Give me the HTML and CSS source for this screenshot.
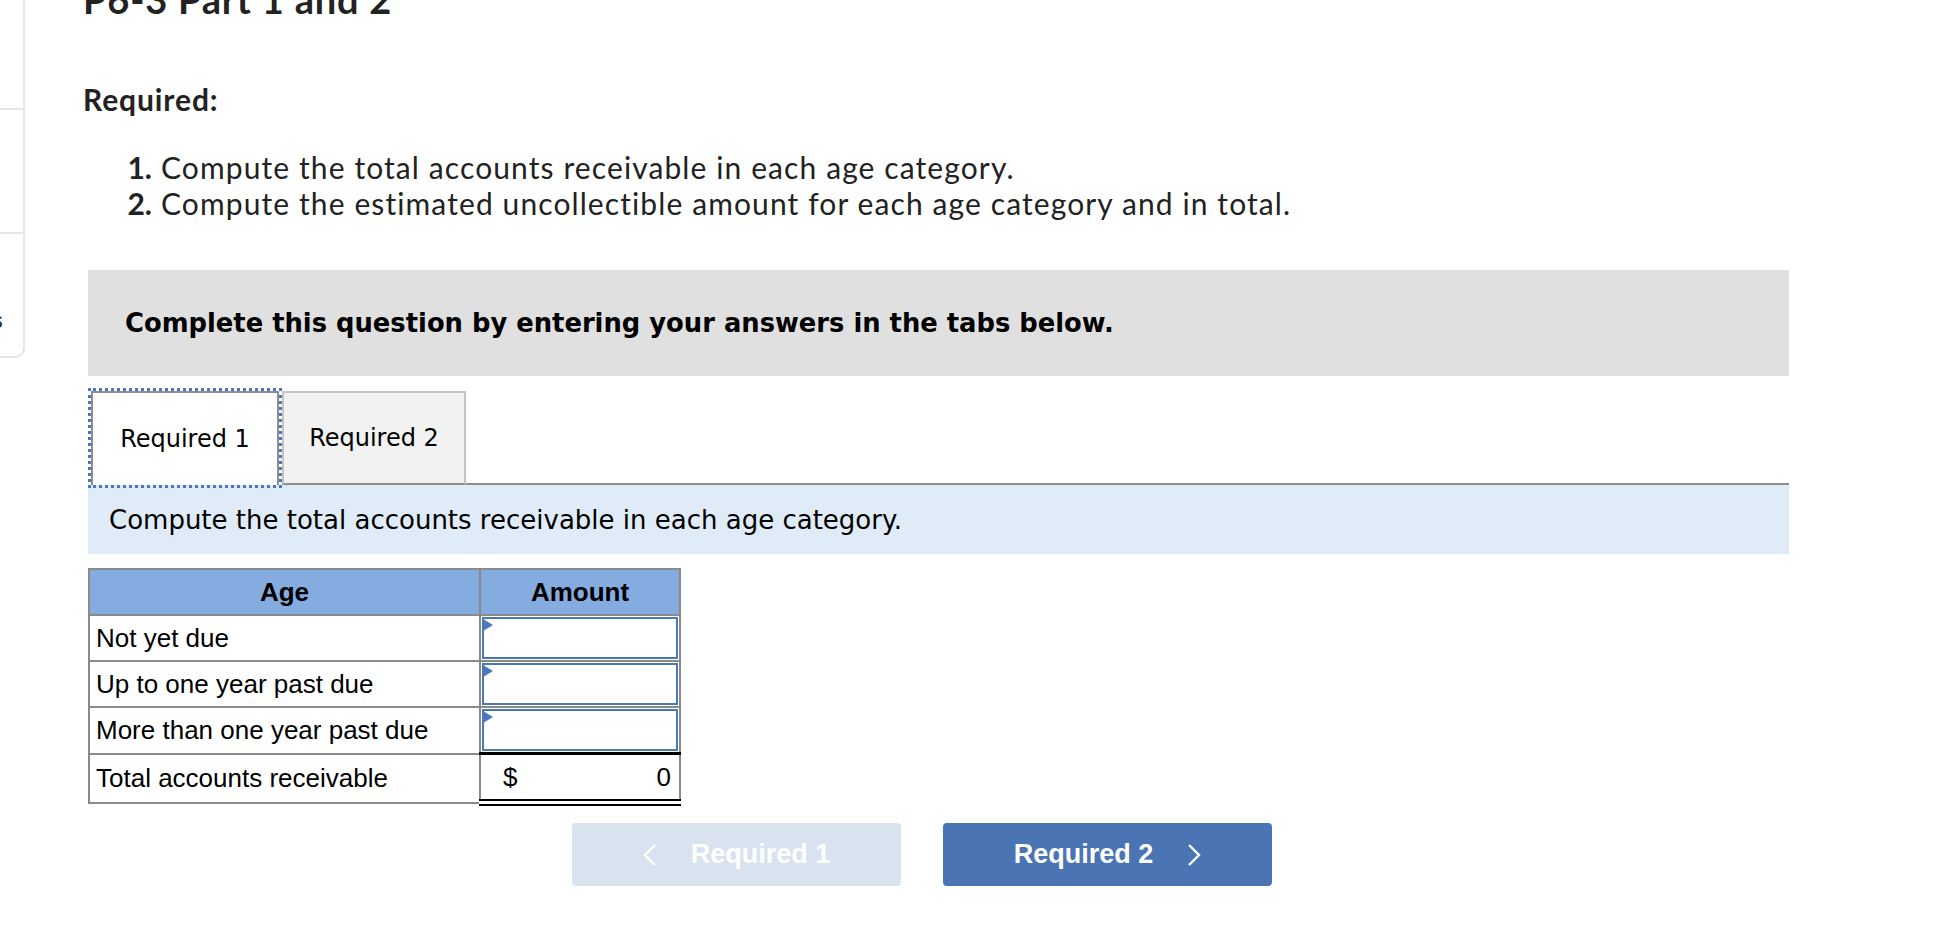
FILE: index.html
```html
<!DOCTYPE html>
<html lang="en">
<head>
    <meta charset="UTF-8">
    <meta name="viewport" content="width=device-width, initial-scale=1.0">
    <title>P6-3 Part 1 and 2</title>
    <link rel="stylesheet" href="styles.css">
</head>
<body>
    <div class="layout">
        <aside class="side-panel">
            <div class="side-row side-top"></div>
            <div class="side-row side-mid"></div>
            <div class="side-row side-last"><span class="side-text">s</span></div>
        </aside>

        <main class="question">
            <h1 class="question-title">P6-3 Part 1 and 2</h1>

            <h2 class="required-label">Required:</h2>
            <ol class="required-list">
                <li><span class="num">1.</span>Compute the total accounts receivable in each age category.</li>
                <li><span class="num">2.</span>Compute the estimated uncollectible amount for each age category and in total.</li>
            </ol>

            <div class="answer-area">
                <div class="instructions">Complete this question by entering your answers in the tabs below.</div>

                <div class="tabs">
                    <button class="tab active">Required 1</button>
                    <button class="tab">Required 2</button>
                    <div class="tab-fill"></div>
                </div>

                <div class="tab-prompt">Compute the total accounts receivable in each age category.</div>

                <table class="ar-table">
                    <thead>
                        <tr>
                            <th class="col-age">Age</th>
                            <th class="col-amount">Amount</th>
                        </tr>
                    </thead>
                    <tbody>
                        <tr>
                            <td class="label">Not yet due</td>
                            <td class="entry"><div class="input-wrap"><input type="text"></div></td>
                        </tr>
                        <tr>
                            <td class="label">Up to one year past due</td>
                            <td class="entry"><div class="input-wrap"><input type="text"></div></td>
                        </tr>
                        <tr>
                            <td class="label">More than one year past due</td>
                            <td class="entry"><div class="input-wrap"><input type="text"></div></td>
                        </tr>
                        <tr>
                            <td class="label">Total accounts receivable</td>
                            <td class="total"><span>$</span><span>0</span></td>
                        </tr>
                    </tbody>
                </table>

                <div class="nav-buttons">
                    <button class="nav-btn prev" disabled>
                        <svg width="14" height="22" viewBox="0 0 14 22"><polyline points="12,1 2,11 12,21" fill="none" stroke="#fff" stroke-width="2.4"/></svg>
                        <span>Required 1</span>
                    </button>
                    <button class="nav-btn next">
                        <span>Required 2</span>
                        <svg width="14" height="22" viewBox="0 0 14 22"><polyline points="2,1 12,11 2,21" fill="none" stroke="#fff" stroke-width="2.4"/></svg>
                    </button>
                </div>
            </div>
        </main>
    </div>
</body>
</html>
```

FILE: styles.css
```css
/* General */
body {
    margin: 0;
    background: #fff;
    color: #222;
    font-family: 'Lato', 'Open Sans', sans-serif;
    overflow: hidden;
}

.layout {
    display: flex;
    align-items: flex-start;
}

/* Left panel (cut off) */
.side-panel {
    width: 23px;
    flex-shrink: 0;
    border-right: 2px solid #e6e6e6;
    border-bottom: 2px solid #e6e6e6;
    border-bottom-right-radius: 10px;
}

.side-row {
    border-bottom: 2px solid #e6e6e6;
}

.side-top {
    height: 108px;
}

.side-mid {
    height: 122px;
}

.side-last {
    height: 122px;
    border-bottom: none;
    overflow: hidden;
}

.side-text {
    display: block;
    font-size: 22px;
    line-height: 28px;
    font-weight: 700;
    color: #333;
    margin: 72px 0 0 -7px;
}

/* Question */
.question {
    padding-left: 58px;
    flex: 1;
}

.question-title {
    font-size: 38px;
    font-weight: 700;
    letter-spacing: 0.8px;
    line-height: 40px;
    margin: -21px 0 0 0;
    color: #222;
}

.required-label {
    font-size: 30px;
    font-weight: 700;
    letter-spacing: 0.9px;
    line-height: 36px;
    margin: 62px 0 0 0;
    color: #222;
}

.required-list {
    list-style: none;
    margin: 32px 0 0 0;
    padding: 0 0 0 39px;
    font-size: 30px;
    letter-spacing: 1.1px;
    line-height: 36px;
}

.required-list li {
    display: flex;
}

.required-list .num {
    width: 30px;
    text-align: right;
    margin-right: 9px;
    font-weight: 700;
    letter-spacing: 0;
}

/* Answer area */
.answer-area {
    margin-left: 5px;
    width: 1701px;
    margin-top: 49px;
}

.instructions {
    background: #e0e0e0;
    height: 106px;
    display: flex;
    align-items: center;
    padding-left: 37px;
    font-family: 'DejaVu Sans', Verdana, sans-serif;
    font-weight: bold;
    font-size: 25.8px;
    color: #000;
}

/* Tabs */
.tabs {
    display: flex;
    align-items: flex-end;
    margin-top: 15px;
    height: 94px;
}

.tab {
    font-family: 'DejaVu Sans', Verdana, sans-serif;
    font-size: 24px;
    color: #000;
    height: 94px;
    padding: 0;
    margin: 0;
    white-space: nowrap;
    cursor: pointer;
}

.tab.active {
    background: #fff;
    border: 2px solid #8e8e8e;
    border-bottom: none;
    outline: 3px dotted #4a78bf;
    outline-offset: 0;
    margin-left: 3px;
    width: 188px;
}

.tab:not(.active) {
    background: #f2f2f2;
    border: 2px solid #c4c4c4;
    border-bottom: 2px solid #8e8e8e;
    width: 184px;
    margin-left: 3px;
}

.tab-fill {
    flex: 1;
    border-bottom: 2px solid #8e8e8e;
}

.tab-prompt {
    background: #dfebf7;
    height: 69px;
    display: flex;
    align-items: center;
    padding-left: 21px;
    font-family: 'DejaVu Sans', Verdana, sans-serif;
    font-size: 26px;
    color: #000;
}

/* Table */
.ar-table {
    border-collapse: collapse;
    margin-top: 14px;
    font-family: 'Liberation Sans', Arial, sans-serif;
    font-size: 26px;
    color: #000;
}

.ar-table th,
.ar-table td {
    border: 2px solid #8a8a8a;
    height: 44px;
    padding: 0;
}

.ar-table th {
    background: #84ace0;
    font-weight: bold;
    text-align: center;
}

.col-age {
    width: 389px;
}

.col-amount {
    width: 198px;
}

.ar-table td.label {
    padding-left: 6px;
    text-align: left;
}

.entry {
    padding: 0;
}

.input-wrap {
    position: relative;
    height: 44px;
    padding: 1px;
    box-sizing: border-box;
}

.input-wrap::before {
    content: "";
    position: absolute;
    left: 2px;
    top: 3px;
    border-left: 10px solid #4a78bf;
    border-top: 6px solid transparent;
    border-bottom: 6px solid transparent;
}

.input-wrap input {
    width: 100%;
    height: 100%;
    box-sizing: border-box;
    border: 2px solid #4d78b8;
    margin: 0;
    background: #fff;
    font-size: 22px;
}

.ar-table td.total {
    border-top: 3px solid #000;
    border-bottom: 7px double #000;
    padding: 0 8px 0 22px;
}

.total span:first-child {
    float: left;
}

.total span:last-child {
    float: right;
}

/* Navigation buttons */
.nav-buttons {
    display: flex;
    gap: 42px;
    margin: 17px 0 0 484px;
}

.nav-btn {
    width: 329px;
    height: 63px;
    border: none;
    border-radius: 4px;
    display: flex;
    align-items: center;
    justify-content: center;
    gap: 34px;
    color: #fff;
    font-family: 'Liberation Sans', Arial, sans-serif;
    font-weight: bold;
    font-size: 27px;
    cursor: pointer;
}

.nav-btn.prev {
    background: #d9e3ef;
    cursor: default;
}

.nav-btn.next {
    background: #4a74b4;
}
```
